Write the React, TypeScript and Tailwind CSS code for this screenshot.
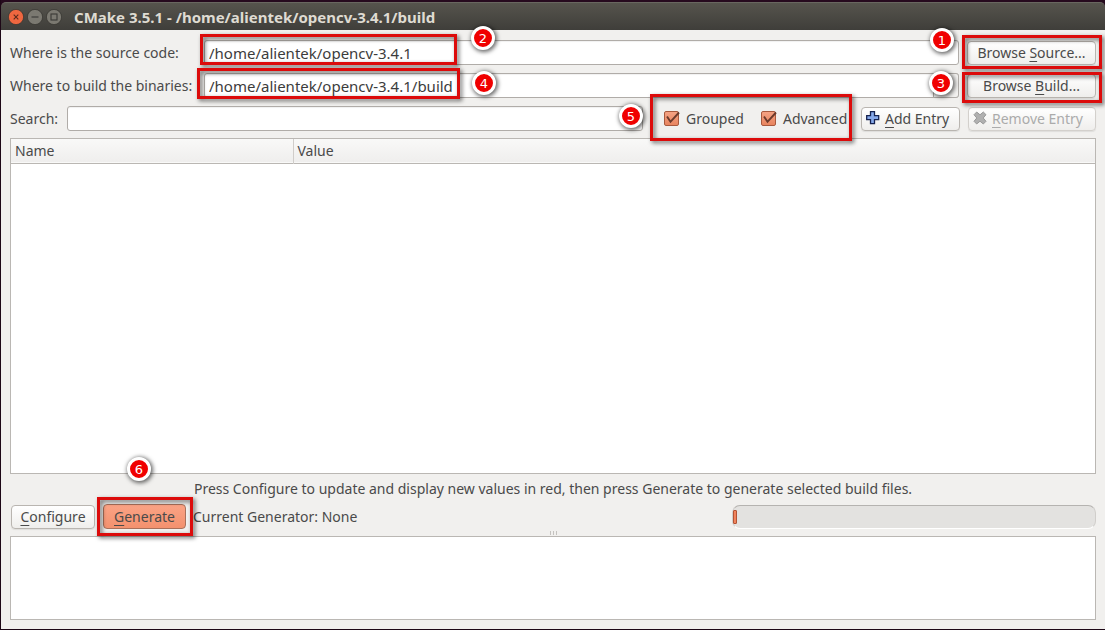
import React, { useState } from 'react';
import clsx from 'clsx';

interface MarkerProps {
  step: number;
  className: string;
}

// Numbered step badge
const Marker: React.FC<MarkerProps> = ({ step, className }) => (
  <span
    className={clsx(
      'absolute z-20 w-6 h-6 rounded-full border-[3px] border-white bg-[#f00000] flex items-center justify-center',
      'font-["DejaVu_Sans"] text-[13px] leading-none text-white shadow-[1px_1px_4px_1px_rgba(0,0,0,0.6)] pointer-events-none',
      className
    )}
  >
    {step}
  </span>
);

// Red highlight rectangle
const Frame: React.FC<{ className: string }> = ({ className }) => (
  <span
    className={clsx(
      'absolute z-10 border-[3px] border-[#dc0b0b] drop-shadow-[2px_2px_2px_rgba(0,0,0,0.6)] pointer-events-none',
      className
    )}
  />
);

const inputClass =
  'block w-full h-[25px] px-1 rounded-[3px] border border-[#b0aca8] bg-white text-[15px] text-[#3c3c3c] outline-none shadow-[inset_0_1px_1px_rgba(0,0,0,0.06)]';

const buttonClass =
  'flex h-6 items-center rounded-[4px] border border-[#b9b5b0] bg-linear-to-b from-white to-[#efeeec] whitespace-nowrap shadow-[0_1px_1px_rgba(0,0,0,0.08)]';

const Mnemonic: React.FC<{ children: string }> = ({ children }) => (
  <span className="underline decoration-1 underline-offset-[3px] [text-decoration-skip-ink:none]">{children}</span>
);

interface CheckProps {
  label: string;
  checked: boolean;
  onChange: (value: boolean) => void;
}

const Check: React.FC<CheckProps> = ({ label, checked, onChange }) => (
  <label className="flex items-center gap-[7px]">
    <span className="relative block w-[15px] h-[15px]">
      <input
        type="checkbox"
        checked={checked}
        onChange={(e) => onChange(e.target.checked)}
        className="block w-[15px] h-[15px] appearance-none rounded-[2px] border border-[#a8593d] bg-linear-to-b from-[#f4a283] to-[#e8855f]"
      />
      {checked && (
        <svg viewBox="0 0 15 15" className="absolute inset-0 w-[15px] h-[15px] pointer-events-none overflow-visible">
          <path d="M3 5.5 L6.5 10.8 L15 1.5" fill="none" stroke="#6b3a2b" strokeWidth="1.9" />
        </svg>
      )}
    </span>
    {label}
  </label>
);

const App: React.FC = () => {
  const [source, setSource] = useState('/home/alientek/opencv-3.4.1');
  const [build, setBuild] = useState('/home/alientek/opencv-3.4.1/build');
  const [search, setSearch] = useState('');
  const [grouped, setGrouped] = useState(true);
  const [advanced, setAdvanced] = useState(true);

  return (
    <div className="min-h-screen flex flex-col border-l border-b border-[#1d0716] bg-[#f1f0ee] font-['Noto_Sans',sans-serif] text-[14px] leading-5 text-[#4a4a4a]">
      {/* Title bar */}
      <header className="h-[30px] border-t-2 border-[#260a1e] bg-[#260a1e]">
        <div className="flex h-full items-center rounded-t-[5px] border-t border-[#696760] bg-linear-to-b from-[#56544d] to-[#3f3e3a] pl-[7px]">
          <div className="flex gap-[3px]">
            <button aria-label="Close" className="w-4 h-4">
              <svg viewBox="0 0 16 16" className="w-4 h-4">
                <circle cx="8" cy="8" r="7.6" fill="#ef6740" stroke="#35332f" strokeWidth="0.7" />
                <path d="M5.7 5.7 L10.3 10.3 M10.3 5.7 L5.7 10.3" stroke="#5a2a1c" strokeWidth="1.1" />
              </svg>
            </button>
            <button aria-label="Minimize" className="w-4 h-4">
              <svg viewBox="0 0 16 16" className="w-4 h-4">
                <circle cx="8" cy="8" r="7.6" fill="#7b7971" stroke="#35332f" strokeWidth="0.7" />
                <path d="M4.5 8 H11.5" stroke="#3a3935" strokeWidth="1.1" />
              </svg>
            </button>
            <button aria-label="Maximize" className="w-4 h-4">
              <svg viewBox="0 0 16 16" className="w-4 h-4">
                <circle cx="8" cy="8" r="7.6" fill="#7b7971" stroke="#35332f" strokeWidth="0.7" />
                <rect x="5" y="5" width="6" height="6" fill="none" stroke="#3a3935" strokeWidth="1.1" />
              </svg>
            </button>
          </div>
          <h1 className="ml-3 font-bold text-[15px] text-[#dfdbd2] whitespace-nowrap">
            CMake 3.5.1 - /home/alientek/opencv-3.4.1/build
          </h1>
        </div>
      </header>

      <main className="flex flex-1 flex-col px-[9px] pt-2.5 pb-[9px]">
        <div className="flex flex-col gap-2">
          {/* Source directory */}
          <div className="flex h-[25px] items-center gap-2">
            <label htmlFor="source" className="w-[186px] shrink-0 whitespace-nowrap">
              Where is the source code:
            </label>
            <div className="relative flex-1">
              <input id="source" value={source} onChange={(e) => setSource(e.target.value)} className={inputClass} />
              <Frame className="-left-1 -top-1.5 w-[257px] h-[31px]" />
              <Marker step={2} className="left-[267px] -top-3.5" />
              <Marker step={1} className="right-[5px] -top-3" />
            </div>
            <div className="relative w-[129px]">
              <button className={clsx(buttonClass, 'w-full justify-center')}>
                <span>Browse <Mnemonic>S</Mnemonic>ource...</span>
              </button>
              <Frame className="-left-[5px] -right-1.5 -top-1.5 h-[34px]" />
            </div>
          </div>

          {/* Build directory */}
          <div className="flex h-[25px] items-center gap-2">
            <label htmlFor="build" className="w-[186px] shrink-0 whitespace-nowrap">
              Where to build the binaries:
            </label>
            <div className="relative flex-1">
              <input id="build" value={build} onChange={(e) => setBuild(e.target.value)} className={clsx(inputClass, 'pr-7')} />
              <button
                aria-label="Recent build directories"
                className="absolute right-0 top-0 h-[25px] w-[26px] rounded-r-[3px] border border-[#b0aca8] bg-[#f3f2f0]"
              />
              <Frame className="-left-[7px] -top-[5px] w-[263px] h-[31px]" />
              <Marker step={4} className="left-[268px] -top-0.5" />
              <Marker step={3} className="right-1.5 -top-0.5" />
            </div>
            <div className="relative w-[129px]">
              <button className={clsx(buttonClass, 'w-full justify-center')}>
                <span>Browse <Mnemonic>B</Mnemonic>uild...</span>
              </button>
              <Frame className="-left-[5px] -right-1.5 -top-0.5 h-[31px]" />
            </div>
          </div>

          {/* Search and entry tools */}
          <div className="flex h-[25px] items-center">
            <label htmlFor="search" className="w-[57px] shrink-0">
              Search:
            </label>
            <div className="relative flex-1">
              <input id="search" value={search} onChange={(e) => setSearch(e.target.value)} className={inputClass} />
              <Marker step={5} className="right-0 -top-0.5" />
            </div>
            <div className="relative ml-[21px] mr-3 flex w-[185px] gap-[17px]">
              <Check label="Grouped" checked={grouped} onChange={setGrouped} />
              <Check label="Advanced" checked={advanced} onChange={setAdvanced} />
              <Frame className="-left-3.5 -right-[3px] -top-[15px] h-[47px]" />
            </div>
            <button className={clsx(buttonClass, 'w-[99px] gap-1 pl-1')}>
              <svg viewBox="0 0 15 15" className="w-[15px] h-[15px]">
                <path d="M4.5 0.7 H8.5 V4.7 H12.7 V8.7 H8.5 V12.7 H4.5 V8.7 H0.7 V4.7 H4.5 Z" fill="#86a9ea" stroke="#15224f" strokeWidth="1.3" />
              </svg>
              <span><Mnemonic>A</Mnemonic>dd Entry</span>
            </button>
            <button disabled className={clsx(buttonClass, 'ml-2 w-32 gap-1 border-[#d3d0cc] pl-1 text-[#ababab]')}>
              <svg viewBox="0 0 15 15" className="w-[15px] h-[15px]">
                <path
                  d="M3.7 1 L7 3.8 L10.3 1 L13 3.7 L10.2 7 L13 10.3 L10.3 13 L7 10.2 L3.7 13 L1 10.3 L3.8 7 L1 3.7 Z"
                  fill="#b0b0b0"
                  stroke="#999"
                />
              </svg>
              <span><Mnemonic>R</Mnemonic>emove Entry</span>
            </button>
          </div>
        </div>

        {/* Cache entries */}
        <div className="mt-[7px] flex-1 border border-[#bab7b3] bg-white">
          <table className="w-full table-fixed border-collapse text-left">
            <thead>
              <tr className="h-6 border-b border-[#bab7b3] bg-linear-to-b from-[#f9f9f8] to-[#efeeed]">
                <th className="w-[282px] border-r border-[#d0cdca] p-0 pl-1 font-normal">Name</th>
                <th className="p-0 pl-1 font-normal">Value</th>
              </tr>
            </thead>
            <tbody />
          </table>
        </div>

        <p className="mt-[5px] text-center">
          Press Configure to update and display new values in red, then press Generate to generate selected build files.
        </p>

        <div className="mt-[5px] flex h-[25px] items-center">
          <button className={clsx(buttonClass, 'ml-px w-[84px] justify-center')}>
            <span><Mnemonic>C</Mnemonic>onfigure</span>
          </button>
          <div className="relative ml-2">
            <button className="flex h-[25px] w-[83px] items-center justify-center rounded-[4px] border border-[#a9705a] bg-linear-to-b from-[#fba385] to-[#f3916e]">
              <span><Mnemonic>G</Mnemonic>enerate</span>
            </button>
            <Frame className="-left-1.5 -right-[7px] -top-[7px] h-[39px]" />
            <Marker step={6} className="left-6 -top-[47px]" />
          </div>
          <span className="ml-[7px] flex-1">Current Generator: None</span>
          <div
            role="progressbar"
            aria-label="Progress"
            aria-valuenow={0}
            className="flex h-6 w-[364px] items-center rounded-[8px] border border-t-[#b5b3b0] border-x-[#d0cecb] border-b-white bg-[#e3e2e0]"
          >
            <div className="h-3.5 w-1 rounded-[1px] border border-[#b45334] bg-[#f0835c]" />
          </div>
        </div>

        {/* Splitter grip */}
        <div className="flex h-[7px] items-center justify-center gap-0.5">
          <span className="h-1 w-px bg-[#c4c2bf]" />
          <span className="h-1 w-px bg-[#c4c2bf]" />
          <span className="h-1 w-px bg-[#c4c2bf]" />
        </div>

        <textarea
          readOnly
          aria-label="Output"
          className="block h-[84px] w-full resize-none border border-[#bab7b3] bg-white p-1 outline-none"
        />
      </main>
    </div>
  );
};

export default App;
